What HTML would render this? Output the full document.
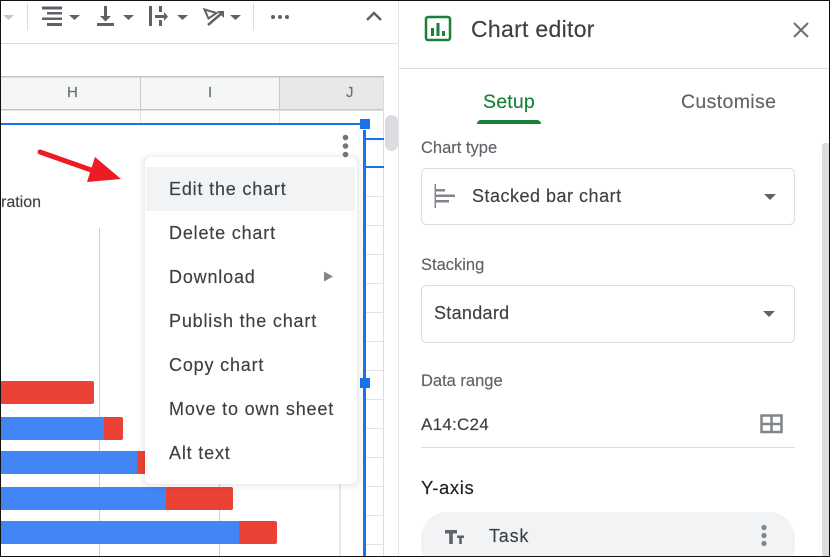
<!DOCTYPE html>
<html><head><meta charset="utf-8">
<style>
html,body{margin:0;padding:0;background:#fff}
#r{position:relative;width:830px;height:557px;overflow:hidden;background:#fff;font-family:"Liberation Sans",sans-serif}
svg{position:absolute;left:0;top:0}
.t{position:absolute;white-space:nowrap;line-height:20px;height:20px;-webkit-text-stroke:.15px currentColor}
.m{left:169px;font-size:18px;color:#3c4043;letter-spacing:.82px}
</style></head><body>
<div id="r">
<svg width="830" height="557" viewBox="0 0 830 557">
<!-- toolbar -->
<g fill="#5f6368" stroke="none">
<path d="M3 15h11l-5.500 5z" fill="#c4c6c9"/>
<rect x="27" y="3" width="1" height="27" fill="#dadce0"/>
<rect x="42" y="6.500" width="20" height="3"/><rect x="47" y="12" width="15" height="2.500"/><rect x="42" y="17.500" width="20" height="2.500"/><rect x="47" y="23" width="15" height="3"/>
<path d="M69 15h11l-5.500 5z"/>
<path d="M104 6h3v10h4l-5.500 5.500-5.500-5.500h4z"/><rect x="97" y="23" width="17" height="3"/>
<path d="M123 15h11l-5.500 5z"/>
<rect x="149" y="6" width="3" height="20"/>
<rect x="159" y="6" width="3" height="6"/><rect x="159" y="20" width="3" height="6"/>
<path d="M155 15h9v-3l4 4.500-4 4.500v-3h-9z"/>
<path d="M177 15h11l-5.500 5z"/>
<path d="M204.500 9.500l12 3.500-8 5.500z" fill="none" stroke="#5f6368" stroke-width="2"/>
<path d="M208 25L222 13" stroke="#5f6368" stroke-width="2.500" fill="none"/><path d="M217 11h7v7z"/>
<path d="M230 15h11l-5.500 5z"/>
<rect x="253" y="3" width="1" height="27" fill="#dadce0"/>
<circle cx="273" cy="17" r="2"/><circle cx="280" cy="17" r="2"/><circle cx="287" cy="17" r="2"/>
<path d="M367 20l7-7 7 7" fill="none" stroke="#5f6368" stroke-width="2.500"/>
</g>
<rect x="0" y="43" width="398" height="1" fill="#dadce0"/>
<!-- headers -->
<rect x="1" y="77" width="383" height="33" fill="#f4f5f5"/>
<rect x="280" y="77" width="104" height="33" fill="#e7e8e9"/>
<rect x="1" y="76" width="383" height="1.500" fill="#c4c6c8"/>
<rect x="1" y="109" width="383" height="1.500" fill="#c4c6c8"/>
<rect x="140" y="77" width="1" height="33" fill="#c4c6c8"/>
<rect x="279" y="77" width="1" height="33" fill="#c4c6c8"/>
<rect x="140" y="110" width="1" height="13" fill="#e3e4e6"/>
<rect x="279" y="110" width="1" height="13" fill="#e3e4e6"/>
<!-- right grid -->
<rect x="383" y="77" width="1" height="480" fill="#dadce0"/>
<g fill="#e0e1e3">
<rect x="366" y="196" width="18" height="1"/><rect x="366" y="225" width="18" height="1"/><rect x="366" y="254" width="18" height="1"/><rect x="366" y="283" width="18" height="1"/><rect x="366" y="312" width="18" height="1"/><rect x="366" y="341" width="18" height="1"/><rect x="366" y="370" width="18" height="1"/><rect x="366" y="399" width="18" height="1"/><rect x="366" y="428" width="18" height="1"/><rect x="366" y="457" width="18" height="1"/><rect x="366" y="486" width="18" height="1"/><rect x="366" y="515" width="18" height="1"/><rect x="366" y="544" width="18" height="1"/>
</g>
<rect x="366" y="138" width="18" height="2" fill="#1a73e8"/>
<rect x="366" y="166" width="18" height="2" fill="#1a73e8"/>
<!-- chart -->
<rect x="99" y="228" width="1" height="329" fill="#cfcfcf"/>
<rect x="219" y="228" width="1" height="329" fill="#cfcfcf"/>
<rect x="339.500" y="228" width="1" height="329" fill="#cfcfcf"/>
<rect x="-5" y="381" width="99" height="23" rx="2" fill="#ea4335"/>
<rect x="-5" y="417" width="128" height="23" rx="2" fill="#ea4335"/>
<rect x="-5" y="417" width="109" height="23" fill="#4285f4"/>
<rect x="-5" y="451" width="170" height="23" rx="2" fill="#ea4335"/>
<rect x="-5" y="451" width="142" height="23" fill="#4285f4"/>
<rect x="-5" y="487" width="238" height="23" rx="2" fill="#ea4335"/>
<rect x="-5" y="487" width="171" height="23" fill="#4285f4"/>
<rect x="-5" y="521" width="282" height="23" rx="2" fill="#ea4335"/>
<rect x="-5" y="521" width="244" height="23" fill="#4285f4"/>
<!-- selection -->
<rect x="1" y="123" width="359" height="2" fill="#1a73e8"/>
<rect x="363" y="130" width="3" height="427" fill="#1a73e8"/>
<rect x="360" y="119" width="10" height="10" fill="#1a73e8"/>
<rect x="360" y="378" width="10" height="10" fill="#1a73e8"/>
<!-- arrow -->
<path d="M40 152L94 171" stroke="#ed1c24" stroke-width="5" stroke-linecap="round"/>
<path d="M95 157L121 179 87 182z" fill="#ed1c24"/>
<!-- menu -->
<rect x="139" y="152" width="224" height="339" rx="11" fill="#000" opacity=".012"/>
<rect x="141" y="154" width="220" height="335" rx="9" fill="#000" opacity=".018"/>
<rect x="143" y="156" width="216" height="330" rx="7" fill="#000" opacity=".03"/>
<rect x="145" y="157" width="212" height="327" rx="6" fill="#fff"/>
<rect x="146" y="167" width="209" height="44" fill="#f1f3f4"/>
<path d="M324 271.500l9 5-9 5z" fill="#80868b"/>
<circle cx="345.500" cy="137.500" r="2.800" fill="#757575"/><circle cx="345.500" cy="146" r="2.800" fill="#757575"/><circle cx="345.500" cy="154.500" r="2.800" fill="#757575"/>
<!-- scrollbar left -->
<rect x="385" y="115" width="13" height="36" rx="6.500" fill="#dadce0"/>
<rect x="398" y="0" width="1" height="557" fill="#e4e5e7"/>
<!-- panel -->
<rect x="399" y="68" width="430" height="1" fill="#dadce0"/>
<rect x="426" y="17" width="24" height="23" rx="2" fill="none" stroke="#188038" stroke-width="2.500"/>
<rect x="431" y="28" width="3" height="8" fill="#188038"/><rect x="436.500" y="23" width="3" height="13" fill="#188038"/><rect x="442" y="31" width="3" height="5" fill="#188038"/>
<path d="M794 23l14 14M808 23l-14 14" stroke="#6b6f73" stroke-width="2" fill="none"/>
<path d="M477 124a4 4 0 0 1 4-4h56a4 4 0 0 1 4 4z" fill="#188038"/>
<rect x="822" y="143" width="8" height="414" rx="3" fill="#dadce0"/>
<rect x="421.500" y="168.500" width="373" height="56" rx="5" fill="#fff" stroke="#dadce0"/>
<rect x="421.500" y="285.500" width="373" height="57" rx="5" fill="#fff" stroke="#dadce0"/>
<rect x="434.500" y="184" width="1.500" height="24" fill="#80868b"/>
<rect x="436" y="189" width="9" height="2.500" fill="#80868b"/><rect x="436" y="194.500" width="19" height="2.500" fill="#80868b"/><rect x="436" y="200" width="13" height="2.500" fill="#80868b"/>
<path d="M764 194h12l-6 6z" fill="#5f6368"/>
<path d="M763 311h12l-6 6z" fill="#5f6368"/>
<rect x="421" y="447" width="374" height="1" fill="#dadce0"/>
<g fill="none" stroke="#80868b" stroke-width="2.500"><rect x="761.500" y="415.500" width="20" height="16.500"/><path d="M771.500 415.500v16.500M761.500 424h20"/></g>
<rect x="421" y="512" width="374" height="60" rx="26" fill="#f1f3f4"/>
<path d="M445 530h12v3.500h-4.200v10.500h-3.600v-10.500h-4.200z" fill="#5f6368"/><path d="M457 535.500h7v2.500h-2.200v6h-2.600v-6h-2.200z" fill="#5f6368"/>
<circle cx="764" cy="527.500" r="2.600" fill="#80868b"/><circle cx="764" cy="535.500" r="2.600" fill="#80868b"/><circle cx="764" cy="543.500" r="2.600" fill="#80868b"/>
<!-- border -->
<rect x="0" y="0" width="830" height="1" fill="#111"/>
<rect x="0" y="0" width="1" height="557" fill="#111"/>
<rect x="829" y="0" width="1" height="557" fill="#111"/>
<rect x="0" y="556" width="830" height="1" fill="#111"/>
</svg>
<div class="t" style="left:67px;top:83px;font-size:15px;color:#6b6f73">H</div>
<div class="t" style="left:208px;top:83px;font-size:15px;color:#6b6f73">I</div>
<div class="t" style="left:346px;top:83px;font-size:15px;color:#6b6f73">J</div>
<div class="t" style="left:1px;top:193px;font-size:16px;color:#424242">ration</div>
<div class="t m" style="top:179px">Edit the chart</div>
<div class="t m" style="top:223px">Delete chart</div>
<div class="t m" style="top:267px">Download</div>
<div class="t m" style="top:311px">Publish the chart</div>
<div class="t m" style="top:355px">Copy chart</div>
<div class="t m" style="top:399px">Move to own sheet</div>
<div class="t m" style="top:443px">Alt text</div>
<div class="t" style="left:471px;top:19px;font-size:23px;color:#3c4043;letter-spacing:.3px">Chart editor</div>
<div class="t" style="left:483px;top:92px;font-size:19.500px;color:#188038;letter-spacing:.2px">Setup</div>
<div class="t" style="left:681px;top:92px;font-size:19.500px;color:#5f6368;letter-spacing:.35px">Customise</div>
<div class="t" style="left:421px;top:138px;font-size:16.500px;color:#5f6368">Chart type</div>
<div class="t" style="left:472px;top:186px;font-size:18px;color:#3c4043;letter-spacing:.5px">Stacked bar chart</div>
<div class="t" style="left:421px;top:255px;font-size:16.500px;color:#5f6368">Stacking</div>
<div class="t" style="left:434px;top:303px;font-size:18px;color:#3c4043;letter-spacing:.3px">Standard</div>
<div class="t" style="left:421px;top:371px;font-size:16.500px;color:#5f6368">Data range</div>
<div class="t" style="left:421px;top:415px;font-size:17px;color:#3c4043;letter-spacing:.25px">A14:C24</div>
<div class="t" style="left:421px;top:478px;font-size:18.500px;color:#202124;letter-spacing:.6px">Y-axis</div>
<div class="t" style="left:489px;top:526px;font-size:18px;color:#3c4043;letter-spacing:.8px">Task</div>
</div>
</body></html>
